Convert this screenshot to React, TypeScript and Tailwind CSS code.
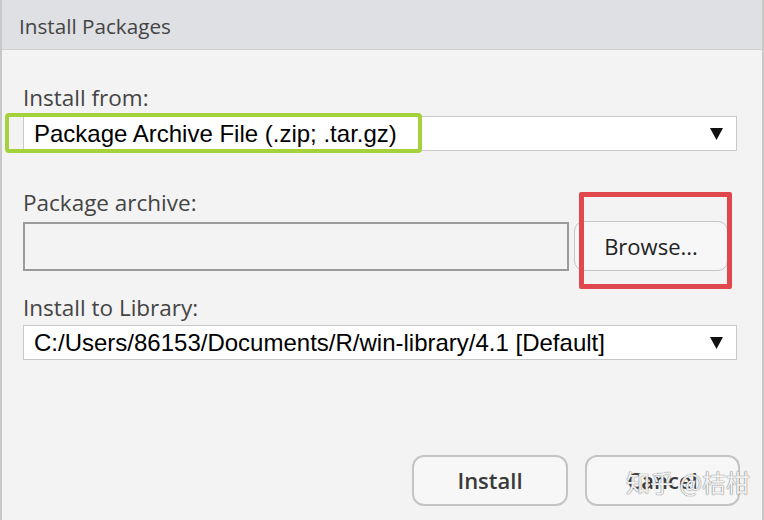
import React from "react";

const ui = { fontFamily: '"Open Sans", "Noto Sans", sans-serif' };
const arial = { fontFamily: '"Liberation Sans", Arial, sans-serif' };

function Arrow() {
  return (
    <svg width="13" height="12" viewBox="0 0 13 12" className="shrink-0">
      <polygon points="0,0 13,0 6.5,12" fill="#111" />
    </svg>
  );
}

export default function App() {
  return (
    <div className="w-[764px] h-[520px] overflow-hidden bg-[#f3f3f3] border-l-2 border-r-2 border-[#c8c8c8] flex flex-col text-[#333]" style={ui}>
      <div className="h-[50px] shrink-0 bg-[#dfe0e3] border-b border-[#d0d0d0] flex items-center pl-[17px] pt-[5px]">
        <span className="text-[20.7px] text-[#444]">Install Packages</span>
      </div>

      <div className="flex-1 flex flex-col pl-[21px] pr-[25px] relative">
        <div className="mt-[34px] text-[22.5px] leading-[28px] text-[#444]">Install from:</div>
        <div className="mt-[4px] h-[35px] shrink-0 bg-white border border-[#c8c8c8] flex items-center pl-[10px] pr-[13px]">
          <span className="flex-1 text-[24px] leading-[28px] text-black" style={arial}>Package Archive File (.zip; .tar.gz)</span>
          <Arrow />
        </div>
        <div className="absolute left-[3px] top-[63px] w-[417px] h-[40px] border-[4px] border-[#a4d13c] rounded-[4px]" />

        <div className="mt-[38px] text-[22.5px] leading-[28px] text-[#444]">Package archive:</div>
        <div className="mt-[4px] flex items-center">
          <div className="w-[546px] h-[49px] border-2 border-[#9a9a9a] bg-[#f3f3f3]" />
          <button className="ml-[5px] w-[154px] h-[50px] rounded-[10px] border border-[#c4c4c4] bg-[#f7f7f7] text-[22px] text-[#222]" style={ui}>Browse...</button>
        </div>
        <div className="absolute left-[577px] top-[142px] w-[153px] h-[97px] border-[5px] border-[#e0484d] rounded-[2px]" />

        <div className="mt-[23px] text-[22.5px] leading-[28px] text-[#444]">Install to Library:</div>
        <div className="mt-[3px] h-[35px] shrink-0 bg-white border border-[#c8c8c8] flex items-center pl-[10px] pr-[13px]">
          <span className="flex-1 text-[24px] leading-[28px] text-black whitespace-nowrap" style={arial}>C:/Users/86153/Documents/R/win-library/4.1 [Default]</span>
          <Arrow />
        </div>

        <div className="mt-[95px] flex justify-end gap-[17px] mr-[-3px]">
          <button className="w-[156px] h-[51px] rounded-[12px] border-2 border-[#c4c4c4] bg-[#f7f7f7] text-[22px] font-semibold text-[#3a3a3a]" style={ui}>Install</button>
          <button className="w-[155px] h-[51px] rounded-[12px] border-2 border-[#c4c4c4] bg-[#f7f7f7] text-[22px] font-semibold text-[#3a3a3a]" style={ui}>Cancel</button>
        </div>
        <div
          className="absolute left-[624px] top-[414px] text-[24px] text-white/90 whitespace-nowrap"
          style={{ fontFamily: '"Noto Sans CJK SC", sans-serif', textShadow: "0 0 1px #777, 0 0 1px #777" }}
        >
          知乎 @桔柑
        </div>
      </div>
    </div>
  );
}
